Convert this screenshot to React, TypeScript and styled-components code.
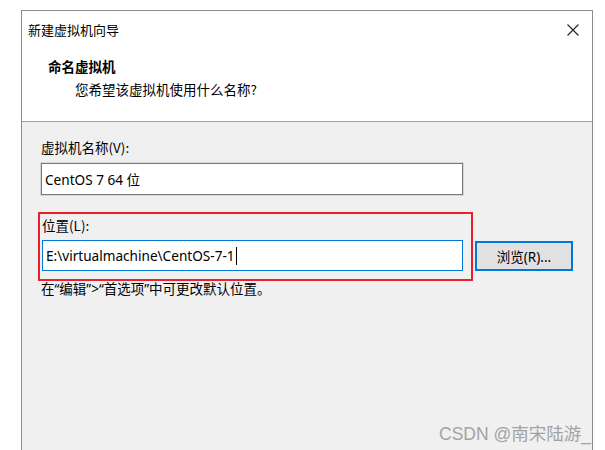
import React from 'react';
import styled, { createGlobalStyle } from 'styled-components';

// -------------------------
// Global
// -------------------------

const Global = createGlobalStyle`
	html, body {
		margin: 0;
		padding: 0;
		background: #ffffff;
		overflow: hidden;
	}
	body {
		font-family: "Noto Sans", "Noto Sans CJK SC", sans-serif;
		color: #000;
	}
`;

const CJK = `"Noto Sans CJK SC", "Noto Sans", sans-serif`;

// -------------------------
// Styled Components
// -------------------------

const Page = styled.div`
	position: relative;
	width: 605px;
	height: 450px;
	padding: 10px 0 0 21px;
	box-sizing: border-box;
	overflow: hidden;
`;

const Window = styled.div`
	width: 572px;
	height: 470px;
	border: 1px solid #8c8c8c;
	box-sizing: border-box;
	display: flex;
	flex-direction: column;
	background: #f0f0f0;
`;

const Header = styled.div`
	height: 110px;
	background: #ffffff;
	border-bottom: 1px solid #a0a0a0;
	display: flex;
	flex-direction: column;
`;

const TitleBar = styled.div`
	height: 37px;
	display: flex;
	align-items: center;
	justify-content: space-between;
	padding: 0 13px 0 6px;
	font-family: ${CJK};
	font-size: 13px;
`;

const PageTitle = styled.div`
	font-family: ${CJK};
	font-size: 13.5px;
	font-weight: bold;
	line-height: 20px;
	padding-left: 26px;
	margin-top: 8px;
`;

const PageSub = styled.div`
	font-family: ${CJK};
	font-size: 13.5px;
	line-height: 20px;
	padding-left: 53px;
	margin-top: 3px;
`;

const Body = styled.div`
	display: flex;
	flex-direction: column;
	padding: 15px 0 0 19px;
`;

const Label = styled.div`
	font-family: ${CJK};
	font-size: 13.5px;
	line-height: 20px;
	height: 20px;
`;

const TextBox = styled.div<{ $focused?: boolean }>`
	box-sizing: border-box;
	width: ${p => (p.$focused ? '421px' : '422px')};
	height: ${p => (p.$focused ? '31px' : '32px')};
	background: #fff;
	border: 1px solid ${p => (p.$focused ? '#0078d7' : '#7a7a7a')};
	box-shadow: ${p => (p.$focused ? 'none' : '0 0 0 1px #d6d6d6')};
	display: flex;
	align-items: center;
	padding-left: 3px;
	font-family: "Noto Sans", ${CJK};
	font-size: 13.6px;
	white-space: pre;
`;

const Caret = styled.span`
	display: inline-block;
	width: 1px;
	height: 18px;
	background: #000;
	margin-left: 1px;
`;

const LocationRow = styled.div`
	display: flex;
	align-items: flex-start;
	margin-top: 17px;
	margin-left: -3px;
`;

const Highlight = styled.div`
	box-sizing: border-box;
	width: 435px;
	height: 69px;
	border: 2px solid #e8212c;
	padding: 1px 0 0 2px;
	display: flex;
	flex-direction: column;
	gap: 5px;
`;

const Button = styled.div`
	box-sizing: border-box;
	margin: 29px 0 0 2px;
	width: 98px;
	height: 30px;
	background: #e1e1e1;
	border: 2px solid #0078d7;
	display: flex;
	align-items: center;
	justify-content: center;
	font-family: "Noto Sans", ${CJK};
	font-size: 13.5px;
`;

const Hint = styled.div`
	font-family: "Noto Sans", ${CJK};
	font-size: 13.5px;
	line-height: 18px;
	margin-top: -1px;
`;

const Watermark = styled.div`
	position: absolute;
	right: 14px;
	top: 420px;
	font-family: "Liberation Sans", ${CJK};
	font-size: 17.5px;
	color: #a3a3a3;
`;

// -------------------------
// Parts
// -------------------------

const CloseIcon = () => (
	<svg width="12" height="12" viewBox="0 0 12 12">
		<path d="M0.5 0.5 L11.5 11.5 M11.5 0.5 L0.5 11.5" stroke="#222" strokeWidth="1.1" />
	</svg>
);

// -------------------------
// Page
// -------------------------

export default () => (
	<Page>
		<Global />
		<Window>
			<Header>
				<TitleBar>
					<span>新建虚拟机向导</span>
					<CloseIcon />
				</TitleBar>
				<PageTitle>命名虚拟机</PageTitle>
				<PageSub>您希望该虚拟机使用什么名称?</PageSub>
			</Header>
			<Body>
				<Label>虚拟机名称(V):</Label>
				<TextBox style={{ marginTop: 6 }}>CentOS 7 64 位</TextBox>
				<LocationRow>
					<Highlight>
						<Label>位置(L):</Label>
						<TextBox $focused>
							E:\virtualmachine\CentOS-7-1
							<Caret />
						</TextBox>
					</Highlight>
					<Button>浏览(R)...</Button>
				</LocationRow>
				<Hint>在“编辑”&gt;“首选项”中可更改默认位置。</Hint>
			</Body>
		</Window>
		<Watermark>CSDN @南宋陆游_</Watermark>
	</Page>
);
